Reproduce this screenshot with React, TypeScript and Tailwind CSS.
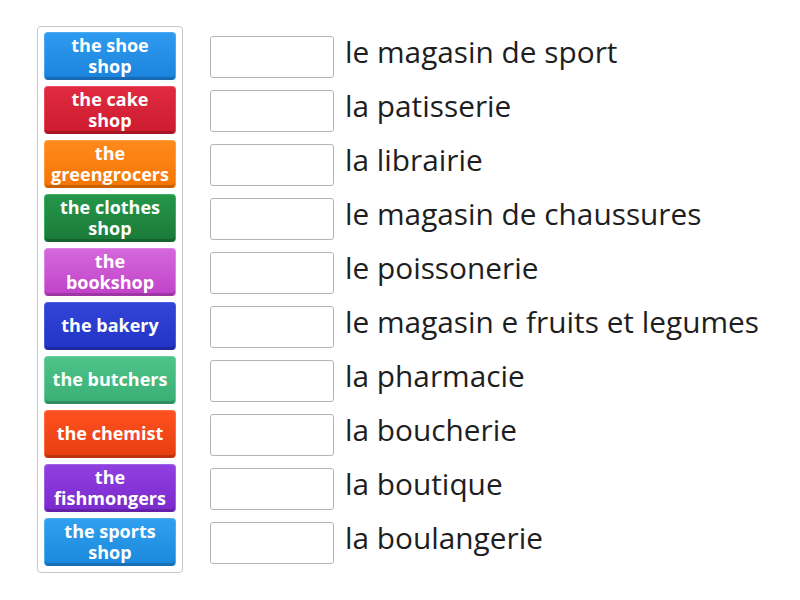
const tiles = [
  { label: "the shoe shop", cls: "bg-gradient-to-b from-[#2f9bf0] to-[#1a82db] border-[#4aa9f2]" },
  { label: "the cake shop", cls: "bg-gradient-to-b from-[#e02a40] to-[#cc1a2e] border-[#e84a5c]" },
  { label: "the greengrocers", cls: "bg-gradient-to-b from-[#ff8a1c] to-[#f57500] border-[#ff9c40]" },
  { label: "the clothes shop", cls: "bg-gradient-to-b from-[#25964a] to-[#1a7a38] border-[#3cb061]" },
  { label: "the bookshop", cls: "bg-gradient-to-b from-[#d468dc] to-[#c040c8] border-[#de84e4]" },
  { label: "the bakery", cls: "bg-gradient-to-b from-[#3245d8] to-[#2233c4] border-[#4a5ce0]" },
  { label: "the butchers", cls: "bg-gradient-to-b from-[#4ec48a] to-[#3aae74] border-[#68d09c]" },
  { label: "the chemist", cls: "bg-gradient-to-b from-[#ff5020] to-[#e63e10] border-[#ff6a40]" },
  { label: "the fishmongers", cls: "bg-gradient-to-b from-[#9040e0] to-[#7a28cc] border-[#a060e6]" },
  { label: "the sports shop", cls: "bg-gradient-to-b from-[#30a0ee] to-[#1a88dc] border-[#4cb0f2]" },
];

const targets = [
  "le magasin de sport",
  "la patisserie",
  "la librairie",
  "le magasin de chaussures",
  "le poissonerie",
  "le magasin e fruits et legumes",
  "la pharmacie",
  "la boucherie",
  "la boutique",
  "la boulangerie",
];

export default function App() {
  return (
    <div
      className="w-[800px] h-[600px] bg-white flex items-start pt-[26px] pl-[37px]"
      style={{ fontFamily: '"Open Sans", sans-serif' }}
    >
      <div className="w-[146px] border border-[#c8c8c8] rounded-[4px] px-[6px] pt-[5px] pb-[6px] flex flex-col gap-[6px]">
        {tiles.map((t) => (
          <div
            key={t.label}
            className={`h-[48px] rounded-[4px] border-t border-l border-r ${t.cls} shadow-[inset_0_-3px_0_rgba(0,0,0,0.18)] flex items-center justify-center text-center text-white font-bold text-[18px] leading-[21px] px-[7px] pb-[2px]`}
          >
            {t.label}
          </div>
        ))}
      </div>
      <div className="ml-[27px] pt-[10px] flex flex-col gap-[12px]">
        {targets.map((t) => (
          <div key={t} className="h-[42px] flex items-center">
            <div className="w-[124px] h-[42px] border border-[#b4b4b4] rounded-[3px] bg-white" />
            <span className="ml-[11px] text-[29.8px] text-[#1e1e1e] leading-none -mt-[10px] whitespace-nowrap">{t}</span>
          </div>
        ))}
      </div>
    </div>
  );
}
